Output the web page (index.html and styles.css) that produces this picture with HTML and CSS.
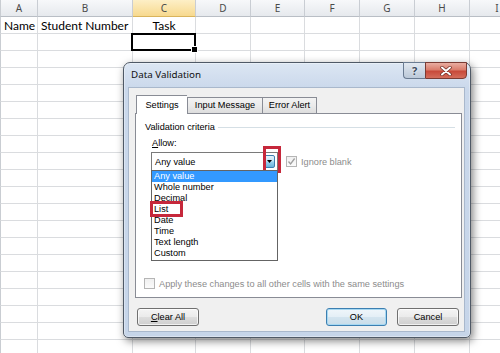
FILE: index.html
```html
<!DOCTYPE html>
<html>
<head>
<meta charset="utf-8">
<link rel="stylesheet" href="styles.css">
</head>
<body>
<div class="sheet">
  <div class="h">A</div><div class="h">B</div><div class="h hsel">C</div><div class="h">D</div><div class="h">E</div><div class="h">F</div><div class="h">G</div><div class="h">H</div><div class="h">I</div>
  <div>Name</div><div>Student Number</div><div class="ctr">Task</div><div></div><div></div><div></div><div></div><div></div><div></div>
  <div></div><div></div><div class="selcell"></div><div></div><div></div><div></div><div></div><div></div><div></div>
  <div></div><div></div><div></div><div></div><div></div><div></div><div></div><div></div><div></div>
  <div></div><div></div><div></div><div></div><div></div><div></div><div></div><div></div><div></div>
  <div></div><div></div><div></div><div></div><div></div><div></div><div></div><div></div><div></div>
  <div></div><div></div><div></div><div></div><div></div><div></div><div></div><div></div><div></div>
  <div></div><div></div><div></div><div></div><div></div><div></div><div></div><div></div><div></div>
  <div></div><div></div><div></div><div></div><div></div><div></div><div></div><div></div><div></div>
  <div></div><div></div><div></div><div></div><div></div><div></div><div></div><div></div><div></div>
  <div></div><div></div><div></div><div></div><div></div><div></div><div></div><div></div><div></div>
  <div></div><div></div><div></div><div></div><div></div><div></div><div></div><div></div><div></div>
  <div></div><div></div><div></div><div></div><div></div><div></div><div></div><div></div><div></div>
  <div></div><div></div><div></div><div></div><div></div><div></div><div></div><div></div><div></div>
  <div></div><div></div><div></div><div></div><div></div><div></div><div></div><div></div><div></div>
  <div></div><div></div><div></div><div></div><div></div><div></div><div></div><div></div><div></div>
  <div></div><div></div><div></div><div></div><div></div><div></div><div></div><div></div><div></div>
  <div></div><div></div><div></div><div></div><div></div><div></div><div></div><div></div><div></div>
  <div></div><div></div><div></div><div></div><div></div><div></div><div></div><div></div><div></div>
  <div></div><div></div><div></div><div></div><div></div><div></div><div></div><div></div><div></div>
  <div></div><div></div><div></div><div></div><div></div><div></div><div></div><div></div><div></div>
</div>

<div class="dialog">
  <div class="titlebar">
    <span class="title">Data Validation</span>
    <div class="capbtns">
      <div class="help">?</div>
      <div class="close">
        <svg width="12" height="10" viewBox="0 0 12 10"><path d="M2 1.5 L10 8.5 M10 1.5 L2 8.5" stroke="#6b2a22" stroke-width="3.4" stroke-linecap="round"/><path d="M2 1.5 L10 8.5 M10 1.5 L2 8.5" stroke="#fff" stroke-width="2" stroke-linecap="round"/></svg>
      </div>
    </div>
  </div>
  <div class="body">
    <div class="tabs">
      <div class="tab active">Settings</div>
      <div class="tab t2">Input Message</div>
      <div class="tab t3">Error Alert</div>
    </div>
    <div class="panel">
      <div class="group"><span>Validation criteria</span><div class="rule"></div></div>
      <div class="allow"><u>A</u>llow:</div>
      <div class="allowrow">
        <div class="combo">
          <span>Any value</span>
          <div class="dropbtn"><svg width="5" height="3" viewBox="0 0 5 3"><path d="M0 0H5L2.5 3Z" fill="#000"/></svg></div>
          <div class="mark markbtn"></div>
        </div>
        <div class="chk dis">
          <span class="box"><svg width="9" height="9" viewBox="0 0 9 9"><path d="M1.5 4.5 L3.6 7 L7.6 1.5" fill="none" stroke="#a0a0a0" stroke-width="1.3"/></svg></span>
          <span>Ignore blank</span>
        </div>
      </div>
      <div class="list">
        <div class="item on">Any value</div>
        <div class="item">Whole number</div>
        <div class="item">Decimal</div>
        <div class="item">List</div>
        <div class="item">Date</div>
        <div class="item">Time</div>
        <div class="item">Text length</div>
        <div class="item">Custom</div>
        <div class="mark marklist"></div>
      </div>
      <div class="chk dis apply">
        <span class="box"></span>
        <span>Apply these changes to all other cells with the same settings</span>
      </div>
    </div>
    <div class="buttons">
      <div class="btn"><u>C</u>lear All</div>
      <div class="btngroup">
        <div class="btn def">OK</div>
        <div class="btn">Cancel</div>
      </div>
    </div>
  </div>
</div>
</body>
</html>
```

FILE: styles.css
```css
* { box-sizing: border-box; margin: 0; padding: 0; }
html, body { width: 500px; height: 353px; overflow: hidden; background: #fff; }
body { position: relative; font-family: "Noto Sans", sans-serif; }

/* spreadsheet */
.sheet {
  display: grid;
  grid-template-columns: 38px 95px 63px 55px 54px 55px 55px 55px 55px;
  grid-auto-rows: 17px;
  width: 525px;
  font-family: Lato, "Noto Sans", sans-serif;
  font-size: 12px;
  color: #000;
}
.sheet > div {
  border-right: 1px solid #dadcdf;
  border-bottom: 1px solid #dadcdf;
  line-height: 17px;
  padding-left: 3px;
  white-space: nowrap;
}
.sheet > div:nth-child(9n+1) { border-left: 1px solid #c9cdd2; }
.sheet .h {
  background: linear-gradient(#f7f8fa, #e6e9ed);
  border-right-color: #c9cdd3;
  border-bottom-color: #b9bec5;
  color: #4a4a4a;
  font-family: "Noto Sans", sans-serif;
  font-size: 10px;
  line-height: 16px;
  text-align: center;
  padding: 0;
}
.sheet .hsel { background: linear-gradient(#fdefc6, #f7d98e); border-bottom-color: #d9b45c; }
.sheet .ctr { text-align: center; padding: 0; }
.sheet .selcell { position: relative; }
.selcell::before {
  content: "";
  position: absolute;
  left: -2px; top: -1px; right: -1px; bottom: -1px;
  border: 2px solid #000;
}
.selcell::after {
  content: "";
  position: absolute;
  right: -3px; bottom: -3px;
  width: 5px; height: 5px;
  background: #000;
  border: 1px solid #fff;
}

/* dialog */
.dialog {
  position: absolute;
  left: 123px; top: 62px;
  width: 348px; height: 276px;
  border: 1px solid #4f5966;
  border-radius: 7px 7px 5px 5px;
  background: linear-gradient(#dce6f3, #cad8eb 26px, #c6d5e9);
  box-shadow: 0 0 0 1px rgba(255,255,255,.35) inset, 2px 3px 9px rgba(0,0,0,.5);
  display: flex;
  flex-direction: column;
}
.titlebar {
  height: 24px;
  display: flex;
  justify-content: space-between;
  align-items: flex-start;
  padding-left: 7px;
}
.title {
  font-size: 9.8px;
  line-height: 24px;
  color: #111;
}
.capbtns { display: flex; margin-top: -1px; margin-right: 3px; }
.help, .close { height: 17px; border: 1px solid #6a7b91; }
.help {
  width: 22px;
  border-right: none;
  border-radius: 0 0 0 4px;
  background: linear-gradient(#e2e8f0, #cdd7e3 50%, #bcc9d9);
  color: #3c4a5c;
  font-size: 11px;
  font-weight: bold;
  line-height: 15px;
  text-align: center;
  text-shadow: 0 0 2px #fff;
}
.close {
  width: 42px;
  border-color: #7b3b33;
  border-radius: 0 0 4px 0;
  background: linear-gradient(#e9ada1, #da7d6c 45%, #c84a3a 55%, #d46d5b);
  display: flex;
  align-items: center;
  justify-content: center;
}
.body {
  margin: 0 5px 5px 4px;
  flex: 1;
  background: #f0f0f0;
  border: 1px solid #a9b8cc;
  padding: 7px 2px 0 6px;
  display: flex;
  flex-direction: column;
  font-family: "Liberation Sans", Arial, sans-serif;
  font-size: 9.2px;
  color: #000;
}
.tabs { display: flex; height: 18px; align-items: flex-end; padding-left: 1px; position: relative; z-index: 1; }
.tab {
  height: 16px;
  border: 1px solid #898c95;
  border-bottom: none;
  background: linear-gradient(#f3f3f3, #ebebeb 50%, #dddddd);
  text-align: center;
  line-height: 15px;
  white-space: nowrap;
}
.tab.active {
  width: 51px;
  height: 19px;
  margin-bottom: -1px;
  background: #fff;
  line-height: 18px;
  border-right: none;
}
.t2 { width: 75px; border-right: none; }
.t3 { width: 55px; }
.panel {
  height: 185px;
  background: #fff;
  border: 1px solid #898c95;
  position: relative;
  display: flex;
  flex-direction: column;
  padding: 7px 6px 0 0;
}
.group { display: flex; align-items: center; padding-left: 9px; line-height: 13px; }
.rule { flex: 1; height: 1px; background: #d5dfe5; margin-left: 3px; }
.allow { padding-left: 16px; line-height: 13px; margin-top: 3px; }
.allowrow { display: flex; align-items: center; margin-top: 2px; padding-left: 15px; }
.combo {
  position: relative;
  width: 127px; height: 19px;
  border: 1px solid #7a7a7a;
  background: #fff;
  display: flex;
  align-items: center;
  padding-left: 3px;
}
.combo span { flex: 1; }
.dropbtn {
  width: 11px; height: 13px;
  margin-right: 2px;
  border: 1px solid #3c7fb1;
  border-radius: 2px;
  background: linear-gradient(#e5f4fc, #c4e5f6 45%, #98d1ef 55%, #68b3db);
  display: flex;
  align-items: center;
  justify-content: center;
}
.mark { position: absolute; border: 3px solid #c6283b; }
.markbtn { left: 111px; top: -7px; width: 18px; height: 27px; }
.chk { display: flex; align-items: center; gap: 4px; }
.chk.dis { color: #8c8c8c; }
.allowrow .chk { margin-left: 8px; }
.box {
  width: 11px; height: 11px;
  border: 1px solid #b5b5b5;
  background: linear-gradient(#f0f0f0, #fbfbfb);
  display: flex;
  align-items: center;
  justify-content: center;
}
.list {
  position: absolute;
  left: 15px; top: 56px;
  width: 127px;
  border: 1px solid #646464;
  background: #fff;
  padding-bottom: 1px;
}
.item { height: 11px; line-height: 11px; padding-left: 2px; white-space: nowrap; }
.item.on { background: #3399ff; color: #fff; }
.marklist { left: -2px; top: 30px; width: 33px; height: 16px; }
.apply { margin-top: auto; margin-bottom: 8px; padding-left: 8px; }
.buttons {
  display: flex;
  justify-content: space-between;
  margin-top: 10px;
  padding-left: 2px;
  padding-right: 3px;
}
.btngroup { display: flex; gap: 10px; }
.btn {
  width: 62px; height: 18px;
  border: 1px solid #707070;
  border-radius: 3px;
  background: linear-gradient(#f4f4f4, #ebebeb 48%, #dddddd 52%, #cfcfcf);
  box-shadow: 0 0 0 1px rgba(255,255,255,.7) inset;
  text-align: center;
  line-height: 16px;
}
.btn.def {
  width: 61px;
  border-color: #3c7fb1;
  box-shadow: 0 0 0 1px #a6d8f2 inset;
  background: linear-gradient(#f0f6fa, #e4eff6 48%, #d3e4ef 52%, #c9dde9);
}
```
